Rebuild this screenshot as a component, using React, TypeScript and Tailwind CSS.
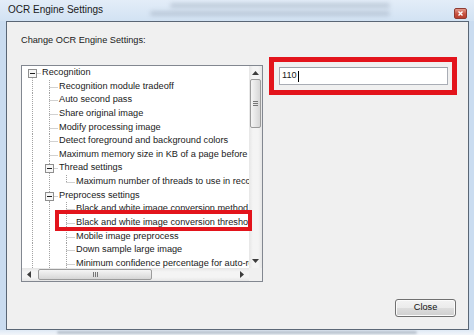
import React from "react";

type Cell = "v" | "tee" | "ell" | "root" | "teeexp";

const ROW_H = 13.64;
const MID = 7.5;
const LINE = "#a3a3a3";

const rows: { text: string; cells: Cell[] }[] = [
  { text: "Recognition", cells: ["root"] },
  { text: "Recognition module tradeoff", cells: ["v", "tee"] },
  { text: "Auto second pass", cells: ["v", "tee"] },
  { text: "Share original image", cells: ["v", "tee"] },
  { text: "Modify processing image", cells: ["v", "tee"] },
  { text: "Detect foreground and background colors", cells: ["v", "tee"] },
  { text: "Maximum memory size in KB of a page before splitting", cells: ["v", "tee"] },
  { text: "Thread settings", cells: ["v", "teeexp"] },
  { text: "Maximum number of threads to use in recognition", cells: ["v", "v", "ell"] },
  { text: "Preprocess settings", cells: ["v", "teeexp"] },
  { text: "Black and white image conversion method", cells: ["v", "v", "tee"] },
  { text: "Black and white image conversion threshold", cells: ["v", "v", "tee"] },
  { text: "Mobile image preprocess", cells: ["v", "v", "tee"] },
  { text: "Down sample large image", cells: ["v", "v", "tee"] },
  { text: "Minimum confidence percentage for auto-rotation", cells: ["v", "v", "tee"] },
];

function TreeCell({ kind }: { kind: Cell }) {
  const full = kind === "v" || kind === "tee" || kind === "teeexp";
  const expander = kind === "root" || kind === "teeexp";
  return (
    <svg width={17} height={ROW_H} className="block shrink-0">
      {full && <line x1={8.5} y1={0} x2={8.5} y2={ROW_H} stroke={LINE} strokeDasharray="1 1" />}
      {kind === "ell" && <line x1={8.5} y1={0} x2={8.5} y2={MID} stroke={LINE} strokeDasharray="1 1" />}
      {kind === "root" && <line x1={8.5} y1={MID} x2={8.5} y2={ROW_H} stroke={LINE} strokeDasharray="1 1" />}
      {kind !== "v" && <line x1={8.5} y1={MID} x2={17} y2={MID} stroke={LINE} strokeDasharray="1 1" />}
      {expander && (
        <g>
          <rect x={4.5} y={MID - 4} width={8} height={8} fill="#f6f6f6" stroke="#8f8f8f" />
          <line x1={6} y1={MID} x2={11} y2={MID} stroke="#1e1e1e" />
        </g>
      )}
    </svg>
  );
}

function Arrow({ dir }: { dir: "up" | "down" | "left" | "right" }) {
  const pts = {
    up: "0,4 3.5,0 7,4",
    down: "0,0 3.5,4 7,0",
    left: "4,0 0,3.5 4,7",
    right: "0,0 4,3.5 0,7",
  }[dir];
  const vertical = dir === "up" || dir === "down";
  return (
    <svg width={vertical ? 7 : 4} height={vertical ? 4 : 7}>
      <polygon points={pts} fill="#3c3c3c" />
    </svg>
  );
}

function VScroll() {
  return (
    <div className="flex flex-col bg-[linear-gradient(90deg,#e6e6e6,#f4f4f4_30%,#f4f4f4_70%,#e6e6e6)]">
      <div className="flex h-[13px] items-center justify-center">
        <Arrow dir="up" />
      </div>
      <div className="mx-[1px] flex h-[49px] items-center justify-center rounded-[2px] border border-[#9b9b9b] bg-[linear-gradient(90deg,#f5f5f5,#e6e6e6_50%,#d6d6d6)]">
        <div className="flex flex-col gap-[1px]">
          <div className="h-px w-[5px] bg-[#777]" />
          <div className="h-px w-[5px] bg-[#777]" />
          <div className="h-px w-[5px] bg-[#777]" />
        </div>
      </div>
      <div className="flex-1" />
      <div className="flex h-[14px] items-center justify-center">
        <Arrow dir="down" />
      </div>
    </div>
  );
}

function HScroll() {
  return (
    <div className="flex bg-[linear-gradient(180deg,#e6e6e6,#f4f4f4_30%,#f4f4f4_70%,#e6e6e6)]">
      <div className="flex w-[14px] items-center justify-center">
        <Arrow dir="left" />
      </div>
      <div className="my-[1px] ml-[2px] flex w-[114px] items-center justify-center rounded-[2px] border border-[#9b9b9b] bg-[linear-gradient(180deg,#f5f5f5,#e6e6e6_50%,#d6d6d6)]">
        <div className="flex gap-[1px]">
          <div className="h-[5px] w-px bg-[#777]" />
          <div className="h-[5px] w-px bg-[#777]" />
          <div className="h-[5px] w-px bg-[#777]" />
        </div>
      </div>
      <div className="flex-1" />
      <div className="flex w-[14px] items-center justify-center">
        <Arrow dir="right" />
      </div>
    </div>
  );
}

export default function App() {
  return (
    <div className="relative flex h-[335px] w-[474px] flex-col overflow-hidden bg-[#cadcf0] font-['Liberation_Sans',Arial,sans-serif] text-[#1a1a1a]">
      {/* title bar */}
      <div className="flex h-[21px] items-start justify-between bg-[linear-gradient(180deg,#e3edf8,#d2e2f3)] pl-[8px] pr-[7px]">
        <span className="mt-[4px] text-[10px] leading-[12px]">OCR Engine Settings</span>
        <div className="mt-[8px] flex h-[11px] w-[13px] items-center justify-center rounded-[2px] border border-[#8e3b32] bg-[linear-gradient(180deg,#e49a8c,#c7503f_55%,#b8402f)]">
          <svg width={5} height={5}>
            <path d="M0.5 0.5 L4.5 4.5 M4.5 0.5 L0.5 4.5" stroke="#fff" strokeWidth={1.4} />
          </svg>
        </div>
      </div>
      {/* blurred glass behind the title */}
      <div className="pointer-events-none absolute left-[170px] top-[3px] h-[5px] w-[220px] rounded-full bg-[#8f9db0] opacity-40 blur-[2px]" />
      <div className="pointer-events-none absolute left-[150px] top-[11px] h-[5px] w-[240px] rounded-full bg-[#8f9db0] opacity-40 blur-[2px]" />

      {/* client area */}
      <div className="ml-[6px] flex h-[309px] w-[463px] flex-col border border-[#5a6675] bg-[#f0f0f0]">
        <div className="pl-[14px] pt-[12px] text-[9.2px] leading-[12px]">Change OCR Engine Settings:</div>

        <div className="mt-[19px] flex pl-[14px]">
          <div className="grid h-[217px] w-[242px] grid-cols-[1fr_13px] grid-rows-[1fr_13px] border border-[#828790] bg-white">
            <div className="overflow-hidden pl-[2px]">
              {rows.map((r, i) => (
                <div key={i} className="flex h-[13.64px] items-center">
                  {r.cells.map((c, j) => (
                    <TreeCell key={j} kind={c} />
                  ))}
                  <span className="whitespace-nowrap pl-[1px] text-[9.2px] leading-[13.64px]">{r.text}</span>
                </div>
              ))}
            </div>
            <VScroll />
            <HScroll />
            <div className="bg-[#f0f0f0]" />
          </div>

          <div className="ml-[16px] mt-[2px] flex h-[18px] w-[169px] items-center border border-[#a9adb5] border-t-[#9aa0a8] bg-white pl-[2px] text-[9.2px]">
            <span>110</span>
            <span className="ml-[1px] inline-block h-[11px] w-px bg-black" />
          </div>
        </div>

        <div className="mr-[12px] mt-[17px] flex justify-end">
          <button className="flex h-[18px] w-[61px] items-center justify-center rounded-[3px] border border-[#707070] bg-[linear-gradient(180deg,#f3f3f3,#ebebeb_50%,#dddddd_50%,#cfcfcf)] text-[9.2px] text-[#111] shadow-[inset_0_0_0_1px_#fbfbfb]">
            Close
          </button>
        </div>
      </div>

      {/* bottom frame */}
      <div className="flex flex-1 items-end justify-center bg-[linear-gradient(180deg,#dfe9f5,#f3f6fa)]">
        <div className="mb-[1px] h-[3px] w-[360px] rounded-full bg-[#8a96a5] opacity-50 blur-[1px]" />
      </div>

      {/* red annotation boxes */}
      <div className="pointer-events-none absolute left-[55px] top-[210px] h-[21px] w-[197px] border-[4px] border-[#e3141c]" />
      <div className="pointer-events-none absolute left-[269px] top-[57px] h-[38px] w-[188px] border-[5px] border-[#e3141c]" />
    </div>
  );
}
